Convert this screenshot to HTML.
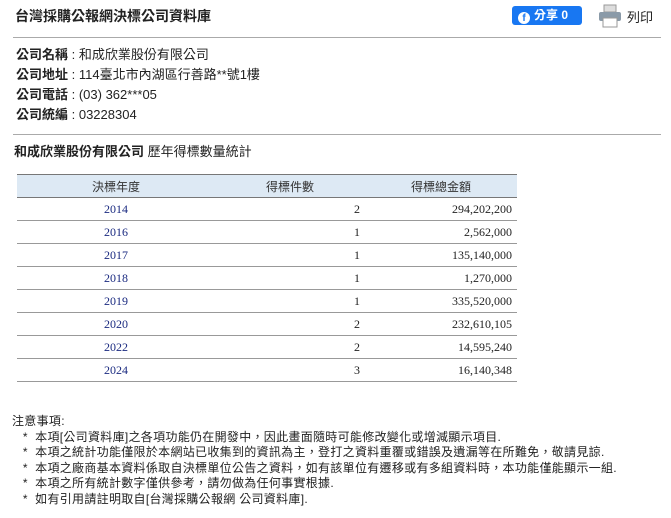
<!DOCTYPE html>
<html><head><meta charset="utf-8"><style>
body{margin:0;background:#fff;font-family:"Liberation Sans","Noto Sans CJK TC",sans-serif;color:#222;width:671px;height:518px;overflow:hidden;position:relative}
.a{position:absolute;white-space:nowrap}
.t{left:15px;top:6px;font-size:14px;font-weight:bold}
.hr{position:absolute;left:13px;width:648px;height:1px;background:#aaa}
.info{left:16px;font-size:13px;line-height:20px;top:45px}
.info b{font-weight:bold}
.fb{left:512px;top:6px;width:70px;height:19px;background:#1877f2;border-radius:3px;color:#fff;font-size:12px;font-weight:bold;line-height:19px}
table{position:absolute;left:17px;top:174px;border-collapse:collapse;width:500px;font-family:"Liberation Serif","Noto Serif CJK TC",serif;font-size:12px}
th{background:#dde9f4;font-weight:normal;height:22px;padding:0;border-top:1px solid #777;border-bottom:1px solid #777;font-family:"Liberation Sans","Noto Sans CJK TC",sans-serif;font-size:12px;color:#333}
td{height:22px;padding:0;border-bottom:1px solid #999;color:#222}
td.y{text-align:center;color:#1a2a80}
td.n{text-align:right;padding-right:5px}
.notes{left:12px;top:414px;font-size:12px;line-height:15.5px;color:#222;letter-spacing:0.3px}
</style></head><body>
<div class="a t">台灣採購公報網決標公司資料庫</div>
<div class="a fb"><span style="display:inline-block;width:12px;height:12px;border-radius:50%;background:#fff;color:#1877f2;font-size:10px;line-height:13px;text-align:center;margin:0 4px 0 6px;vertical-align:-2px">f</span>分享 0</div>
<svg class="a" style="left:598px;top:4px" width="24" height="24" viewBox="0 0 24 24"><rect x="6" y="1" width="12" height="7" fill="#ddd" stroke="#999"/><rect x="1" y="8" width="22" height="9" rx="2" fill="#8a9aa8"/><rect x="5" y="14" width="14" height="9" fill="#fff" stroke="#999"/></svg>
<div class="a" style="left:627px;top:7px;font-size:13px">列印</div>
<div class="hr" style="top:37px"></div>
<div class="a info"><b>公司名稱</b> : 和成欣業股份有限公司<br><b>公司地址</b> : 114臺北市內湖區行善路**號1樓<br><b>公司電話</b> : (03) 362***05<br><b>公司統編</b> : 03228304</div>
<div class="hr" style="top:134px"></div>
<div class="a" style="left:14px;top:141px;font-size:13px"><b>和成欣業股份有限公司</b> 歷年得標數量統計</div>
<table>
<tr><th style="width:198px">決標年度</th><th style="width:150px">得標件數</th><th>得標總金額</th></tr>
<tr><td class="y">2014</td><td class="n">2</td><td class="n">294,202,200</td></tr>
<tr><td class="y">2016</td><td class="n">1</td><td class="n">2,562,000</td></tr>
<tr><td class="y">2017</td><td class="n">1</td><td class="n">135,140,000</td></tr>
<tr><td class="y">2018</td><td class="n">1</td><td class="n">1,270,000</td></tr>
<tr><td class="y">2019</td><td class="n">1</td><td class="n">335,520,000</td></tr>
<tr><td class="y">2020</td><td class="n">2</td><td class="n">232,610,105</td></tr>
<tr><td class="y">2022</td><td class="n">2</td><td class="n">14,595,240</td></tr>
<tr><td class="y">2024</td><td class="n">3</td><td class="n">16,140,348</td></tr>
</table>
<div class="a notes">注意事項:<br>
&nbsp;&nbsp;&nbsp;*&nbsp; 本項[公司資料庫]之各項功能仍在開發中，因此畫面隨時可能修改變化或增減顯示項目.<br>
&nbsp;&nbsp;&nbsp;*&nbsp; 本項之統計功能僅限於本網站已收集到的資訊為主，登打之資料重覆或錯誤及遺漏等在所難免，敬請見諒.<br>
&nbsp;&nbsp;&nbsp;*&nbsp; 本項之廠商基本資料係取自決標單位公告之資料，如有該單位有遷移或有多組資料時，本功能僅能顯示一組.<br>
&nbsp;&nbsp;&nbsp;*&nbsp; 本項之所有統計數字僅供參考，請勿做為任何事實根據.<br>
&nbsp;&nbsp;&nbsp;*&nbsp; 如有引用請註明取自[台灣採購公報網 公司資料庫].</div>
</body></html>
